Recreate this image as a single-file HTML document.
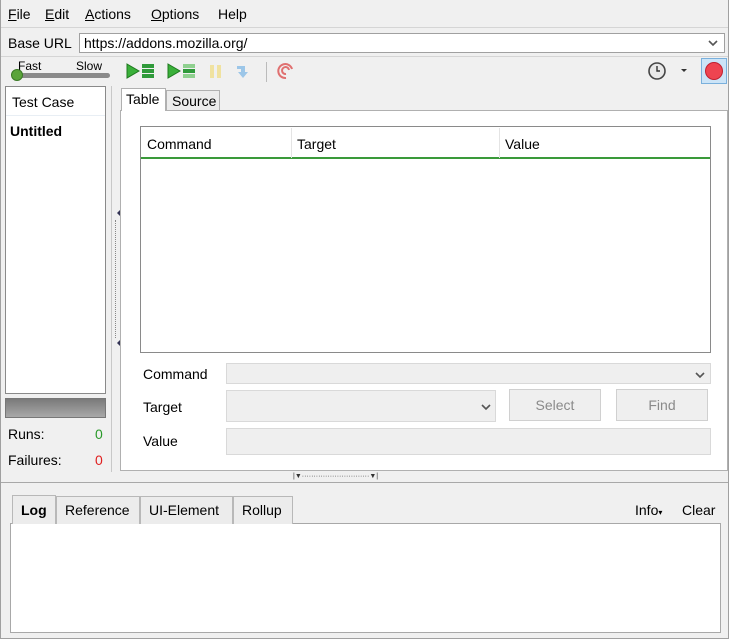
<!DOCTYPE html>
<html><head><style>
*{box-sizing:border-box;margin:0;padding:0}
body{width:729px;height:639px;background:#f0f0f0;font-family:"Liberation Sans",sans-serif;font-size:14px;color:#000;position:relative;overflow:hidden}
.a{position:absolute}
.t{position:absolute;white-space:nowrap;line-height:16px}
u{text-decoration:underline}
.box{position:absolute;background:#fff;border:1px solid #adadad}
.dis{position:absolute;background:#efefef;border:1px solid #d9d9d9}
.btn{position:absolute;background:#efefef;border:1px solid #d0d0d0;color:#8a8a8a;text-align:center;line-height:30px}
.chev{position:absolute}
</style></head><body>
<div class="t" style="left:8px;top:6px"><u>F</u>ile</div>
<div class="t" style="left:45px;top:6px"><u>E</u>dit</div>
<div class="t" style="left:85px;top:6px"><u>A</u>ctions</div>
<div class="t" style="left:151px;top:6px"><u>O</u>ptions</div>
<div class="t" style="left:218px;top:6px">Help</div>
<div class="a" style="left:0;top:27px;width:729px;height:1px;background:#d5d5d5"></div>
<div class="t" style="left:8px;top:35px">Base URL</div>
<div class="box" style="left:79px;top:33px;width:646px;height:20px;border-color:#a0a0a0"></div>
<div class="t" style="left:84px;top:35px">https://addons.mozilla.org/</div>
<svg class="chev" style="left:708px;top:40px" width="10" height="7"><path d="M1 1l4 4 4-4" fill="none" stroke="#555" stroke-width="1.6"/></svg>
<div class="a" style="left:0;top:56px;width:729px;height:1px;background:#d5d5d5"></div>
<div class="t" style="left:18px;top:58px;font-size:12px">Fast</div>
<div class="t" style="left:76px;top:58px;font-size:12px">Slow</div>
<div class="a" style="left:14px;top:73px;width:96px;height:5px;background:#8a8a8a;border-radius:3px"></div>
<div class="a" style="left:11px;top:69px;width:12px;height:12px;background:#5aa43a;border-radius:50%;border:1px solid #3a7a25"></div>
<svg class="a" style="left:125px;top:62px" width="150" height="20">
<polygon points="2,2 14,9 2,16" fill="#3ab03a" stroke="#1f7a1f"/><rect x="17" y="2" width="12" height="4" fill="#2f9a3a"/><rect x="17" y="7" width="12" height="4" fill="#2f9a3a"/><rect x="17" y="12" width="12" height="4" fill="#2f9a3a"/>
<polygon points="43,2 55,9 43,16" fill="#3ab03a" stroke="#1f7a1f"/><rect x="58" y="2" width="12" height="4" fill="#8fd08f"/><rect x="58" y="7" width="12" height="4" fill="#2f9a3a"/><rect x="58" y="12" width="12" height="4" fill="#8fd08f"/>
<rect x="85" y="3" width="4" height="13" fill="#f0e2a0"/><rect x="92" y="3" width="4" height="13" fill="#f0e2a0"/>
<path d="M112 4 h8 v6 h3 l-5 6 l-5 -6 h3 v-3 h-4z" fill="#9cc6e8"/>
<rect x="141" y="0" width="1" height="20" fill="#bbb"/>
</svg>
<svg class="a" style="left:276px;top:61px" width="20" height="20"><path d="M10 17 A7 7 0 1 1 16 8 M10 13 A3.5 3.5 0 1 1 13 9" fill="none" stroke="#e07070" stroke-width="2"/></svg>
<svg class="a" style="left:647px;top:61px" width="50" height="20"><circle cx="10" cy="10" r="8" fill="#e8e8e8" stroke="#444" stroke-width="1.6"/><path d="M10 5v5h3" stroke="#333" fill="none" stroke-width="1.4"/><polygon points="34,8 40,8 37,11" fill="#333"/></svg>
<div class="a" style="left:701px;top:58px;width:26px;height:26px;background:#cce4f7;border:1px solid #7ab0dc"></div>
<div class="a" style="left:705px;top:62px;width:18px;height:18px;background:#ee4450;border-radius:50%;border:1px solid #c02030"></div>
<div class="box" style="left:5px;top:86px;width:101px;height:308px;border-color:#8a8a8a"></div>
<div class="a" style="left:6px;top:87px;width:99px;height:29px;border-bottom:1px solid #e8eef4"></div>
<div class="t" style="left:12px;top:94px">Test Case</div>
<div class="t" style="left:10px;top:123px;font-weight:bold">Untitled</div>
<div class="a" style="left:5px;top:398px;width:101px;height:20px;background:linear-gradient(#7a7a7a,#a8a8a8);border:1px solid #777"></div>
<div class="t" style="left:8px;top:426px">Runs:</div><div class="t" style="left:95px;top:426px;color:#2a9a2a">0</div>
<div class="t" style="left:8px;top:452px">Failures:</div><div class="t" style="left:95px;top:452px;color:#e02020">0</div>
<div class="a" style="left:111px;top:86px;width:1px;height:386px;background:#c8c8c8"></div>
<div class="a" style="left:114px;top:210px;width:0;height:0;border:3px solid transparent;border-right-color:#335;"></div>
<div class="a" style="left:115px;top:220px;width:1px;height:118px;border-left:1px dotted #888"></div>
<div class="a" style="left:114px;top:340px;width:0;height:0;border:3px solid transparent;border-right-color:#335;"></div>
<div class="a" style="left:120px;top:110px;width:608px;height:361px;background:#fff;border:1px solid #b0b0b0"></div>
<div class="a" style="left:121px;top:88px;width:45px;height:23px;background:#fff;border:1px solid #b0b0b0;border-bottom:none"></div>
<div class="t" style="left:126px;top:91px">Table</div>
<div class="a" style="left:166px;top:90px;width:54px;height:20px;background:#ececec;border:1px solid #b0b0b0;border-bottom:none"></div>
<div class="t" style="left:172px;top:93px">Source</div>
<div class="a" style="left:140px;top:126px;width:571px;height:227px;border:1px solid #8a8a8a;background:#fff"></div>
<div class="a" style="left:141px;top:127px;width:569px;height:32px;border-bottom:2px solid #3a9a3a"></div>
<div class="a" style="left:291px;top:128px;width:1px;height:30px;background:#e4e4e4"></div>
<div class="a" style="left:499px;top:128px;width:1px;height:30px;background:#e4e4e4"></div>
<div class="t" style="left:147px;top:136px">Command</div>
<div class="t" style="left:297px;top:136px">Target</div>
<div class="t" style="left:505px;top:136px">Value</div>
<div class="t" style="left:143px;top:366px">Command</div>
<div class="dis" style="left:226px;top:363px;width:485px;height:21px"></div>
<svg class="chev" style="left:695px;top:372px" width="10" height="7"><path d="M1 1l4 4 4-4" fill="none" stroke="#555" stroke-width="1.6"/></svg>
<div class="t" style="left:143px;top:399px">Target</div>
<div class="dis" style="left:226px;top:390px;width:270px;height:32px"></div>
<svg class="chev" style="left:481px;top:404px" width="10" height="7"><path d="M1 1l4 4 4-4" fill="none" stroke="#555" stroke-width="1.6"/></svg>
<div class="btn" style="left:509px;top:389px;width:92px;height:32px">Select</div>
<div class="btn" style="left:616px;top:389px;width:92px;height:32px">Find</div>
<div class="t" style="left:143px;top:433px">Value</div>
<div class="dis" style="left:226px;top:428px;width:485px;height:27px"></div>
<div class="a" style="left:0;top:482px;width:729px;height:1px;background:#a8a8a8"></div>
<div class="a" style="left:293px;top:474px;width:145px;height:6px;font-size:7px;line-height:6px;color:#333;white-space:nowrap">|▼·····························▼|</div>
<div class="a" style="left:10px;top:523px;width:711px;height:110px;background:#fff;border:1px solid #a8a8a8"></div>
<div class="a" style="left:12px;top:495px;width:44px;height:29px;background:#ececec;border:1px solid #b8b8b8;border-bottom:none"></div>
<div class="t" style="left:21px;top:502px;font-weight:bold">Log</div>
<div class="a" style="left:56px;top:496px;width:84px;height:28px;background:#ececec;border:1px solid #b8b8b8;border-bottom:none"></div>
<div class="t" style="left:65px;top:502px">Reference</div>
<div class="a" style="left:140px;top:496px;width:93px;height:28px;background:#ececec;border:1px solid #b8b8b8;border-bottom:none"></div>
<div class="t" style="left:149px;top:502px">UI-Element</div>
<div class="a" style="left:233px;top:496px;width:60px;height:28px;background:#ececec;border:1px solid #b8b8b8;border-bottom:none"></div>
<div class="t" style="left:242px;top:502px">Rollup</div>
<div class="t" style="left:635px;top:502px">Info<span style="font-size:8px">▾</span></div>
<div class="t" style="left:682px;top:502px">Clear</div>
<div class="a" style="left:0;top:0;width:729px;height:639px;border:1px solid #a0a0a0;border-top:none"></div>
</body></html>
